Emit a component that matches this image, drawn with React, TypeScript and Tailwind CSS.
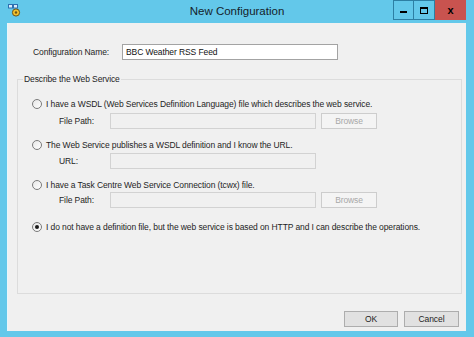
import React from 'react'

const font = { fontFamily: '"Liberation Sans", Arial, sans-serif' }

function Radio({ checked, label }: { checked?: boolean; label: string }) {
  return (
    <div className="flex items-center h-[14px] pl-[14px] gap-[4px]">
      <span className="w-[10px] h-[10px] rounded-full border border-[#7a7a7a] bg-gradient-to-br from-[#e6e6e6] to-white flex items-center justify-center">
        {checked && <span className="w-[4px] h-[4px] rounded-full bg-[#1a1a1a]" />}
      </span>
      <span>{label}</span>
    </div>
  )
}

function FieldRow({ label, browse }: { label: string; browse?: boolean }) {
  return (
    <div className="flex items-center h-[16px] pl-[41px]">
      <span className="w-[51px]">{label}</span>
      <div className="w-[206px] h-[16px] border border-[#d2d2d2] bg-[#f0f0f0]" />
      {browse && (
        <div className="ml-[5px] w-[56px] h-[16px] border border-[#cdcdcd] bg-[#f4f4f4] text-[#a8a8a8] flex items-center justify-center">
          Browse
        </div>
      )}
    </div>
  )
}

function TitleIcon() {
  return (
    <svg width="13" height="13" viewBox="0 0 13 13">
      <rect x="0.5" y="0.5" width="4" height="3.5" fill="#d9ecfa" stroke="#2d6fb0" />
      <rect x="5.5" y="0.5" width="4" height="3.5" fill="#d9ecfa" stroke="#2d6fb0" />
      <circle cx="8" cy="8.5" r="3.6" fill="#f3c12c" stroke="#6b5417" strokeWidth="1" />
      <circle cx="8" cy="8.5" r="1.2" fill="#6b5417" />
    </svg>
  )
}

export default function App() {
  return (
    <div className="w-[474px] h-[337px] bg-[#63c8ea] flex flex-col text-[8.5px] tracking-[-0.1px] text-[#1e1e1e]" style={font}>
      {/* 标题栏 */}
      <div className="h-[23px] grid grid-cols-[81px_1fr_81px] items-start">
        <div className="pl-[8px] pt-[4px]">
          <TitleIcon />
        </div>
        <div className="text-center text-[11.5px] tracking-normal leading-[23px] text-[#15232b]">New Configuration</div>
        <div className="flex h-[20px]">
          <div className="w-[21px] h-[20px] border border-[#2d7fa3] flex items-end justify-center pb-[6px]">
            <span className="w-[7px] h-[2px] bg-black" />
          </div>
          <div className="w-[21px] h-[20px] border-y border-r border-[#2d7fa3] flex items-center justify-center">
            <span className="w-[8px] h-[7px] border border-black border-t-2" />
          </div>
          <div className="w-[31px] h-[20px] bg-[#c9534f] flex items-center justify-center text-[11px] font-bold text-black leading-none">
            x
          </div>
        </div>
      </div>

      {/* 内容区 */}
      <div className="flex-1 ml-[7px] mr-[8px] mb-[6px] bg-[#f0f0f0] border-l border-[#e9f6fb] flex flex-col">
        <div className="flex items-center mt-[21px] h-[16px] pl-[25px]">
          <span className="w-[89px]">Configuration Name:</span>
          <div className="w-[216px] h-[16px] border border-[#a3a3a3] bg-white flex items-center pl-[3px] text-[#111]">
            BBC Weather RSS Feed
          </div>
        </div>

        <div className="relative mt-[19px] ml-[9px] mr-[4px] h-[215px] border border-[#dcdcdc] flex flex-col">
          <span className="absolute -top-[7px] left-[5px] px-[1px] bg-[#f0f0f0] leading-[12px]">Describe the Web Service</span>
          <div className="mt-[17px]">
            <Radio label="I have a WSDL (Web Services Definition Language) file which describes the web service." />
          </div>
          <div className="mt-[2px]">
            <FieldRow label="File Path:" browse />
          </div>
          <div className="mt-[9px]">
            <Radio label="The Web Service publishes a WSDL definition and I know the URL." />
          </div>
          <div className="mt-[1px]">
            <FieldRow label="URL:" />
          </div>
          <div className="mt-[9px]">
            <Radio label="I have a Task Centre Web Service Connection (tcwx) file." />
          </div>
          <div className="mt-0">
            <FieldRow label="File Path:" browse />
          </div>
          <div className="mt-[12px]">
            <Radio checked label="I do not have a definition file, but the web service is based on HTTP and I can describe the operations." />
          </div>
        </div>

        <div className="flex justify-end gap-[6px] mt-[17px] mr-[7px]">
          <div className="w-[54px] h-[16px] border border-[#adadad] bg-[#e1e1e1] flex items-center justify-center">OK</div>
          <div className="w-[55px] h-[16px] border border-[#adadad] bg-[#e1e1e1] flex items-center justify-center">Cancel</div>
        </div>
      </div>
    </div>
  )
}
